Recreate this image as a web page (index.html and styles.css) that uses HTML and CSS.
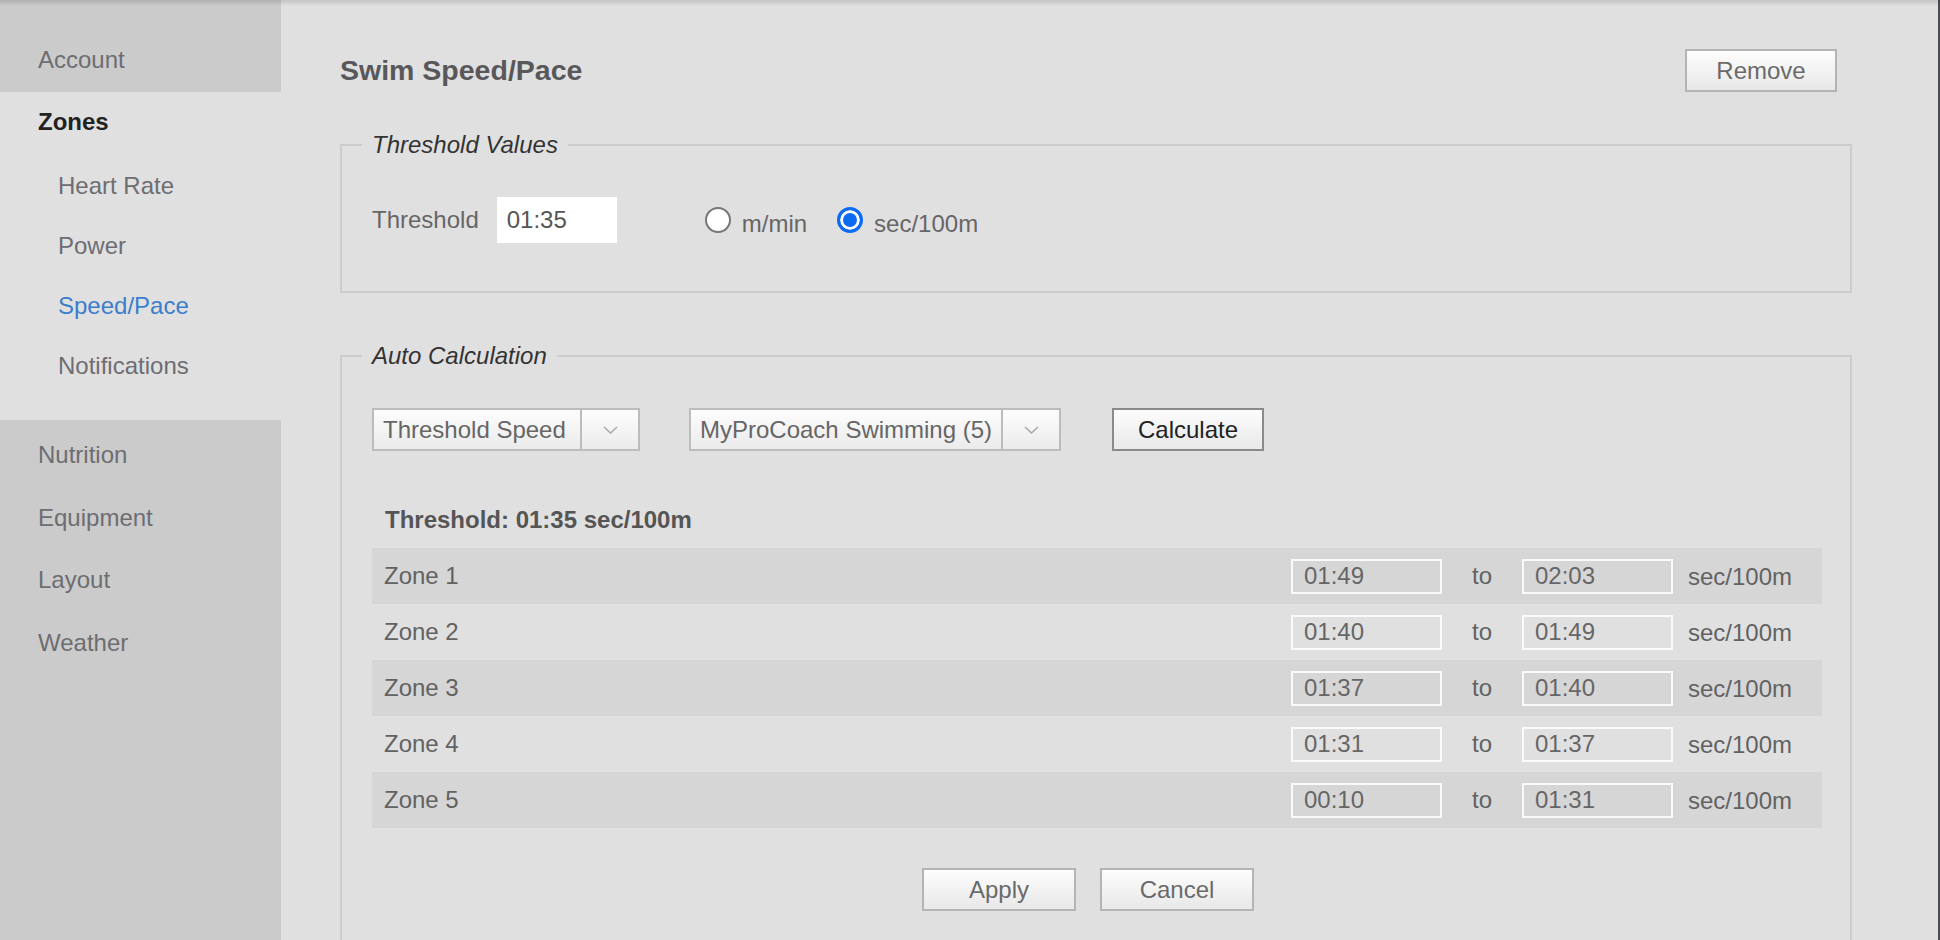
FILE: index.html
```html
<!DOCTYPE html>
<html lang="en">
<head>
  <meta charset="UTF-8" />
  <meta name="viewport" content="width=device-width, initial-scale=1.0" />
  <title>Zones - Speed/Pace</title>
  <link rel="stylesheet" href="styles.css">
</head>
<body>
  <div class="app">
    <nav class="sidebar">
      <ul class="nav nav-account">
        <li>Account</li>
      </ul>
      <ul class="nav nav-zones">
        <li class="current">Zones</li>
        <li>
          <ul class="nav subnav">
            <li>Heart Rate</li>
            <li>Power</li>
            <li class="active">Speed/Pace</li>
            <li>Notifications</li>
          </ul>
        </li>
      </ul>
      <ul class="nav nav-more">
        <li>Nutrition</li>
        <li>Equipment</li>
        <li>Layout</li>
        <li>Weather</li>
      </ul>
    </nav>

    <main class="content">
      <div class="page-head">
        <h1>Swim Speed/Pace</h1>
        <button class="btn" type="button">Remove</button>
      </div>

      <fieldset class="panel panel-threshold">
        <legend>Threshold Values</legend>
        <div class="threshold-row">
          <label class="field-label" for="threshold">Threshold</label>
          <input class="threshold-input" id="threshold" type="text" value="01:35" />
          <label class="radio first">
            <input type="radio" name="unit" value="mmin" />
            <span>m/min</span>
          </label>
          <label class="radio">
            <input type="radio" name="unit" value="sec100" checked />
            <span>sec/100m</span>
          </label>
        </div>
      </fieldset>

      <fieldset class="panel panel-auto">
        <legend>Auto Calculation</legend>
        <div class="calc-row">
          <div class="select select-type">
            <span class="select-value">Threshold Speed</span>
            <span class="select-arrow">
              <svg width="15" height="8" viewBox="0 0 15 8"><polyline points="1,1 7.5,7 14,1" fill="none" stroke="#a8a8a8" stroke-width="1.5"/></svg>
            </span>
          </div>
          <div class="select select-model">
            <span class="select-value">MyProCoach Swimming (5)</span>
            <span class="select-arrow">
              <svg width="15" height="8" viewBox="0 0 15 8"><polyline points="1,1 7.5,7 14,1" fill="none" stroke="#a8a8a8" stroke-width="1.5"/></svg>
            </span>
          </div>
          <button class="btn btn-primary" type="button">Calculate</button>
        </div>

        <div class="calc-summary">Threshold: 01:35 sec/100m</div>

        <div class="zones">
          <div class="zone-row">
            <span class="zone-name">Zone 1</span>
            <input class="zone-input" type="text" value="01:49" />
            <span class="zone-to">to</span>
            <input class="zone-input" type="text" value="02:03" />
            <span class="zone-unit">sec/100m</span>
          </div>
          <div class="zone-row">
            <span class="zone-name">Zone 2</span>
            <input class="zone-input" type="text" value="01:40" />
            <span class="zone-to">to</span>
            <input class="zone-input" type="text" value="01:49" />
            <span class="zone-unit">sec/100m</span>
          </div>
          <div class="zone-row">
            <span class="zone-name">Zone 3</span>
            <input class="zone-input" type="text" value="01:37" />
            <span class="zone-to">to</span>
            <input class="zone-input" type="text" value="01:40" />
            <span class="zone-unit">sec/100m</span>
          </div>
          <div class="zone-row">
            <span class="zone-name">Zone 4</span>
            <input class="zone-input" type="text" value="01:31" />
            <span class="zone-to">to</span>
            <input class="zone-input" type="text" value="01:37" />
            <span class="zone-unit">sec/100m</span>
          </div>
          <div class="zone-row">
            <span class="zone-name">Zone 5</span>
            <input class="zone-input" type="text" value="00:10" />
            <span class="zone-to">to</span>
            <input class="zone-input" type="text" value="01:31" />
            <span class="zone-unit">sec/100m</span>
          </div>
        </div>

        <div class="actions">
          <button class="btn btn-wide" type="button">Apply</button>
          <button class="btn btn-wide" type="button">Cancel</button>
        </div>
      </fieldset>
    </main>
  </div>
</body>
</html>
```

FILE: styles.css
```css
* {
  box-sizing: border-box;
}
html, body {
  margin: 0;
  height: 100%;
}
body {
  font-family: "Liberation Sans", Arial, sans-serif;
  font-size: 24px;
  color: #666;
  background: #e1e0e1;
  overflow: hidden;
}
.app {
  position: relative;
  display: flex;
  min-height: 100vh;
}
/* soft shade under the window toolbar */
.app::before {
  content: "";
  position: absolute;
  left: 0;
  right: 0;
  top: 0;
  height: 6px;
  background: linear-gradient(rgba(0, 0, 0, 0.13), rgba(0, 0, 0, 0));
}

/* sidebar */
.sidebar {
  width: 281px;
  flex: none;
  background: #cbcbcb;
}
.nav {
  list-style: none;
  margin: 0;
  padding: 0;
}
.nav li {
  line-height: 60px;
  padding-left: 38px;
  color: #6d6d72;
}
.nav-account {
  padding: 30px 0 2px;
}
.nav-zones {
  background: #e1e0e1;
  padding-bottom: 24px;
}
.nav-zones > li {
  padding-left: 0;
}
.nav-zones > li.current {
  padding-left: 38px;
  font-weight: bold;
  color: #222;
}
.subnav {
  padding-top: 4px;
}
.subnav li {
  padding-left: 58px;
}
.subnav li.active {
  color: #3b7ecb;
}
.nav-more {
  padding-top: 4px;
}
.nav-more li {
  line-height: 62.5px;
}

/* main area */
.content {
  flex: 1;
  padding: 49px 86px 0 59px;
  border-right: 2px solid #4a4d55;
}
.page-head {
  display: flex;
  justify-content: space-between;
  align-items: center;
  padding-right: 15px;
}
.page-head h1 {
  margin: 0;
  font-size: 28.5px;
  color: #58585a;
}
.btn {
  font: inherit;
  width: 152px;
  height: 43px;
  padding: 0;
  border: 2px solid #b4b4b4;
  background: linear-gradient(#fdfdfd, #e8e8e8);
  color: #6a6a6a;
}
.btn-primary {
  border-color: #8a8a8a;
  color: #222;
}
.btn-wide {
  width: 154px;
}

.panel {
  margin: 39px 0 0;
  min-width: 0;
  border: 2px solid #cdcccd;
  padding: 38px 28px 48px 30px;
}
.panel legend {
  font-style: italic;
  color: #333;
  line-height: 28px;
  padding: 0 10px;
  margin-left: -10px;
}
.panel-auto {
  margin-top: 49px;
  padding: 38px 28px 80px 30px;
}

/* threshold values */
.threshold-row {
  display: flex;
  align-items: center;
  height: 46px;
}
.field-label {
  margin-right: 18px;
}
.threshold-input {
  width: 120px;
  height: 46px;
  border: 0;
  background: #fff;
  font: inherit;
  color: #555;
  padding: 0 10px;
  outline: none;
}
.radio {
  display: flex;
  align-items: center;
  gap: 11px;
  margin-left: 30px;
  color: #666;
}
.radio.first {
  margin-left: 88px;
}
.radio span {
  padding-top: 8px;
}
.radio input {
  appearance: none;
  -webkit-appearance: none;
  margin: 0;
  width: 26px;
  height: 26px;
  border-radius: 50%;
  border: 2px solid #767676;
  background: #fff;
}
.radio input:checked {
  border: 3px solid #0b6cf2;
  background: #0b6cf2;
  box-shadow: inset 0 0 0 3px #fff;
}

/* auto calculation */
.calc-row {
  display: flex;
  align-items: center;
}
.select {
  display: flex;
  height: 43px;
  border: 2px solid #bcbcbc;
  background: linear-gradient(#fdfdfd, #ebebeb);
}
.select-type {
  width: 268px;
  margin-right: 49px;
}
.select-model {
  width: 372px;
  margin-right: 51px;
}
.select-value {
  flex: 1;
  padding-left: 9px;
  line-height: 39px;
  color: #666;
  white-space: nowrap;
}
.select-arrow {
  width: 58px;
  flex: none;
  border-left: 2px solid #bcbcbc;
  display: flex;
  align-items: center;
  justify-content: center;
}

.calc-summary {
  margin: 55px 0 14px;
  padding-left: 13px;
  line-height: 28px;
  font-weight: bold;
  color: #555;
}

.zone-row {
  display: flex;
  align-items: center;
  height: 56px;
  padding: 0 28px 0 12px;
  color: #626262;
}
.zone-row:nth-child(odd) {
  background: #d7d6d7;
}
.zone-name {
  flex: 1;
}
.zone-input {
  width: 151px;
  height: 35px;
  border: 2px solid #fafafa;
  background: transparent;
  font: inherit;
  color: #666;
  padding: 0 11px;
  outline: none;
}
.zone-to {
  width: 80px;
  text-align: center;
}
.zone-unit {
  width: 106px;
  margin-left: 15px;
  padding-top: 2px;
}

.actions {
  display: flex;
  justify-content: center;
  gap: 24px;
  margin-top: 40px;
  padding-right: 18px;
}
```
